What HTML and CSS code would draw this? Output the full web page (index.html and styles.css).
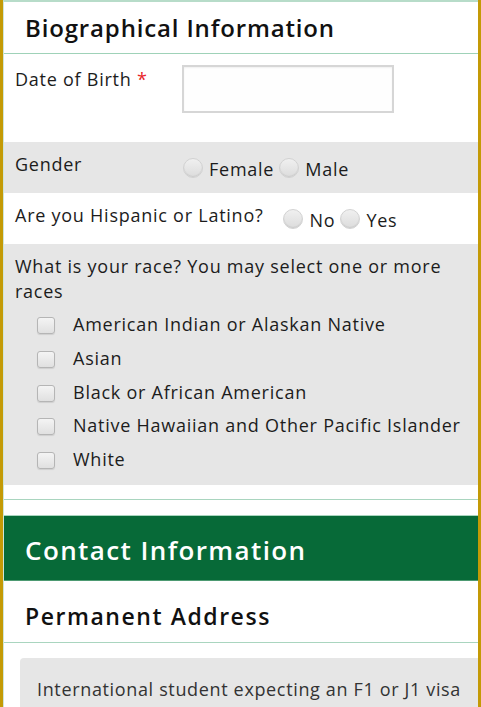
FILE: index.html
```html
<!DOCTYPE html>
<html lang="en">
<head>
<meta charset="utf-8">
<title>Application</title>
<link rel="stylesheet" href="styles.css">
</head>
<body>
<div class="page">
  <div class="panel">
    <section class="bio">
      <h2 class="section-title">Biographical Information</h2>
      <div class="row row-dob">
        <label class="row-label">Date of Birth <span class="req">*</span></label>
        <input class="text-input" type="text">
      </div>
      <div class="row row-alt row-radio">
        <span class="row-label">Gender</span>
        <div class="options">
          <label class="opt"><input type="radio" name="g" class="radio"><span class="opt-text">Female</span></label>
          <label class="opt"><input type="radio" name="g" class="radio"><span class="opt-text">Male</span></label>
        </div>
      </div>
      <div class="row row-radio">
        <span class="row-label">Are you Hispanic or Latino?</span>
        <div class="options">
          <label class="opt"><input type="radio" name="h" class="radio"><span class="opt-text">No</span></label>
          <label class="opt"><input type="radio" name="h" class="radio"><span class="opt-text">Yes</span></label>
        </div>
      </div>
      <div class="row-alt race">
        <p class="race-q">What is your race? You may select one or more races</p>
        <ul class="checks">
          <li><label class="check"><input type="checkbox" class="box"><span>American Indian or Alaskan Native</span></label></li>
          <li><label class="check"><input type="checkbox" class="box"><span>Asian</span></label></li>
          <li><label class="check"><input type="checkbox" class="box"><span>Black or African American</span></label></li>
          <li><label class="check"><input type="checkbox" class="box"><span>Native Hawaiian and Other Pacific Islander</span></label></li>
          <li><label class="check"><input type="checkbox" class="box"><span>White</span></label></li>
        </ul>
      </div>
    </section>
    <section class="contact">
      <h2 class="contact-title">Contact Information</h2>
      <h3 class="sub-title">Permanent Address</h3>
      <div class="content">
        <div class="note">International student expecting an F1 or J1 visa</div>
      </div>
    </section>
  </div>
</div>
</body>
</html>
```
FILE: styles.css
```css
* { box-sizing: border-box; }
html, body { margin: 0; padding: 0; background: #fff; }
body {
  font-family: "Open Sans", "Liberation Sans", sans-serif;
  color: #1c1c1c;
  font-size: 18px;
  letter-spacing: 0.75px;
}
.page {
  border-left: 3px solid #c49a06;
  border-right: 3px solid #c49a06;
  min-height: 707px;
  overflow: hidden;
}
.panel {
  border-left: 1px solid #cfe5d9;
  border-top: 2px solid #b7dcc9;
  min-height: 705px;
}
.bio {
  border-bottom: 1px solid #a9d5bf;
  padding-bottom: 14px;
}
.section-title {
  margin: 0;
  height: 52px;
  line-height: 51px;
  padding-left: 21px;
  font-size: 24px;
  font-weight: 600;
  color: #111;
  border-bottom: 1px solid #9fd2b8;
  letter-spacing: 0.85px;
}
.row {
  display: flex;
  align-items: flex-start;
  padding-left: 11px;
}
.row-alt { background: #e6e6e6; }
.row-label {
  min-width: 148px;
  margin-right: 20px;
  line-height: 24px;
  white-space: nowrap;
}
.row-dob { height: 88px; padding-top: 11px; }
.row-dob .row-label { padding-top: 2px; }
.req { color: #e8262a; }
.text-input {
  width: 212px;
  height: 48px;
  margin: 0 0 0 -1px;
  border: 2px solid #d6d6d6;
  background: #fefefe;
  box-shadow: inset 0 1px 2px rgba(0,0,0,0.06);
  font: inherit;
}
.row-radio { height: 51px; padding-top: 10px; }
.options { display: flex; gap: 5px; }
.opt { display: flex; align-items: flex-start; }
.radio {
  appearance: none;
  -webkit-appearance: none;
  width: 20px;
  height: 20px;
  margin: 6px 6px 0 0;
  border-radius: 50%;
  border: 1px solid #d2d2d2;
  background: linear-gradient(#f0f0f0, #dcdcdc);
  box-shadow: inset 0 -1px 1px rgba(0,0,0,0.08);
}
.opt-text { padding-top: 5px; line-height: 24px; }
.race {
  padding: 10px 0 4px 11px;
}
.race-q {
  margin: 0;
  line-height: 25px;
  padding-right: 8px;
}
.checks {
  list-style: none;
  margin: 0;
  padding: 8px 0 0 22px;
}
.checks li { height: 33.75px; }
.check { display: flex; align-items: flex-start; white-space: nowrap; }
.check span { line-height: 24px; }
.box {
  appearance: none;
  -webkit-appearance: none;
  width: 18px;
  height: 17px;
  margin: 5px 18px 0 0;
  border-radius: 3px;
  border: 1px solid #b5b5b5;
  background: linear-gradient(#f4f4f4, #e0e0e0);
  box-shadow: 0 1px 1px rgba(0,0,0,0.1);
}
.contact {
  margin-top: 15px;
  border-top: 1px solid #a9d5bf;
}
.contact-title {
  margin: 0;
  height: 65px;
  line-height: 62px;
  padding: 3px 0 0 21px;
  background: #076a38;
  color: #fff;
  font-size: 26px;
  font-weight: 600;
  letter-spacing: 1.4px;
  border-bottom: 1px solid #4d9a72;
}
.sub-title {
  margin: 0;
  height: 62px;
  padding: 20px 0 0 21px;
  font-size: 23px;
  font-weight: 600;
  color: #111;
  line-height: 30px;
  letter-spacing: 1.55px;
  border-bottom: 1px solid #a9d5bf;
}
.content { padding: 15px 0 0 16px; }
.note {
  background: #e6e6e6;
  border-radius: 4px 0 0 0;
  padding: 19px 0 14px 17px;
  color: #333;
  font-size: 18px;
  line-height: 24px;
  letter-spacing: 0.65px;
  white-space: nowrap;
}
```
